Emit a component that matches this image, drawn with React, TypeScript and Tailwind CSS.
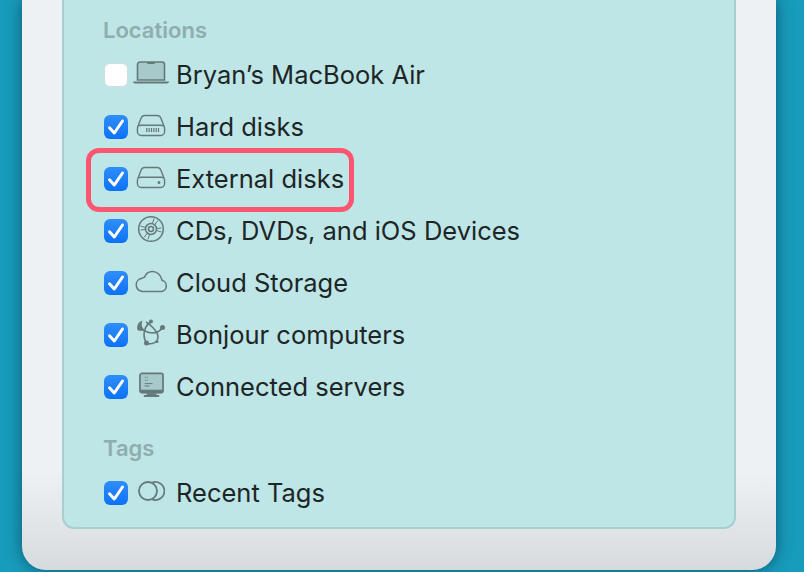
import React from 'react';

const stroke = '#66797a';

function Laptop() {
  return (
    <svg width="38" height="26" viewBox="0 0 38 26" fill="none">
      <path d="M5.500 20V4.500a2.500 2.500 0 0 1 2.500-2.500h22a2.500 2.500 0 0 1 2.500 2.500V20z" fill="#a6c9c9" stroke={stroke} strokeWidth="1.600" />
      <rect x="15" y="2" width="8" height="2" rx="1" fill={stroke} />
      <path d="M1 21.500h36c0 1.200-1 2-2.200 2H3.200C2 23.500 1 22.700 1 21.500z" fill={stroke} />
    </svg>
  );
}

function DiskBody() {
  return (
    <>
      <path d="M9.500 1.500h13c2 0 3.300.8 4 2.500l3.500 8.500c.3.800.5 1.500.5 2.300v2.700a4 4 0 0 1-4 4h-21a4 4 0 0 1-4-4v-2.700c0-.8.2-1.500.5-2.300l3.500-8.500c.7-1.700 2-2.500 4-2.500z" />
      <path d="M2.500 12c.8-.6 1.800-.8 3-.8h21c1.200 0 2.200.2 3 .8" />
    </>
  );
}

function HardDisk() {
  return (
    <svg width="30" height="23" viewBox="0 0 32 23" preserveAspectRatio="none" fill="none" stroke={stroke} strokeWidth="1.500">
      <DiskBody />
      <path d="M11.500 14v4M14 14v4M16.500 14v4M19 14v4M21.500 14v4M24 14v4" strokeWidth="1.300" />
    </svg>
  );
}

function ExternalDisk() {
  return (
    <svg width="30" height="23" viewBox="0 0 32 23" preserveAspectRatio="none" fill="none" stroke={stroke} strokeWidth="1.500">
      <DiskBody />
      <circle cx="24.500" cy="16.500" r="1.500" fill={stroke} stroke="none" />
    </svg>
  );
}

function Disc() {
  return (
    <svg width="28" height="28" viewBox="0 0 28 28" fill="none" stroke={stroke} strokeWidth="1.500">
      <circle cx="14" cy="14" r="12.300" />
      <circle cx="14" cy="14" r="5.500" />
      <circle cx="14" cy="14" r="2.500" />
      <path d="M17 3.500l-1.500 5M21 5.500l-3.500 4.500M11 24.500l1.500-5M7 22.500l3.500-4.500M3.500 11l5 1.500M3.500 15l5-.5M24.500 17l-5-1.500M24.500 13l-5 .5" strokeWidth="1" />
    </svg>
  );
}

function Cloud() {
  return (
    <svg width="33" height="23" viewBox="0 0 34 24" fill="none" stroke={stroke} strokeWidth="1.600">
      <path d="M8 22.500h18.500a6 6 0 0 0 1.500-11.800C27 5.500 23 1.500 18 1.500c-4 0-7 2.500-8.300 6-1 0-2 .4-2.500 1.200C3.800 9.200 1 12 1 15.500c0 4 3.200 7 7 7z" />
    </svg>
  );
}

function Bonjour() {
  return (
    <svg width="30" height="28" viewBox="0 0 30 28" fill="none" stroke={stroke} strokeWidth="1.600">
      <path d="M3 5c2 5 7 9 13 9 4 0 8-2 10-5" />
      <path d="M15 2.500c-4 3-7 8-7 13 0 3 .8 6 2.500 8" />
      <path d="M10 3c4 2.500 12 9 12 15 0 4-3.500 7-10 7" />
      <path d="M1.500 11C.5 7 2 3 6.500 1.500 5 4 5.500 8 8 11.500 5.500 12 3 12 1.500 11z" fill={stroke} stroke="none" />
      <circle cx="15" cy="2.500" r="2" fill={stroke} stroke="none" />
      <circle cx="26.500" cy="8.500" r="2.500" fill={stroke} stroke="none" />
      <circle cx="10.500" cy="24" r="2.500" fill={stroke} stroke="none" />
      <circle cx="21" cy="22.500" r="1.500" fill={stroke} stroke="none" />
    </svg>
  );
}

function Server() {
  return (
    <svg width="25" height="26" viewBox="0 0 26 26" fill="none">
      <rect x="1" y="1" width="24" height="20" rx="2" fill="#a6c9c9" stroke={stroke} strokeWidth="1.800" />
      <path d="M1 18h24v1.500a2 2 0 0 1-2 2H3a2 2 0 0 1-2-2z" fill={stroke} />
      <path d="M8 21.500h10v2H8zM5 23.500h16v2H5z" fill={stroke} />
      <path d="M6 5h1M8 5h1M6 8h1M8 8h1M6 11.500h8M6 14h5" stroke={stroke} strokeWidth="1" />
    </svg>
  );
}

function Tags() {
  return (
    <svg width="27" height="20" viewBox="0 0 27 20" fill="none" stroke={stroke} strokeWidth="1.800">
      <circle cx="10" cy="10" r="9" />
      <path d="M13.750 1.800A9 9 0 1 1 13.750 18.200" />
    </svg>
  );
}

function Check({ on }: { on: boolean }) {
  if (!on) {
    return <div className="w-6 h-6 rounded-[6px] bg-white border border-[#d5dcdc] shrink-0" />;
  }
  return (
    <div className="w-6 h-6 rounded-[6px] bg-gradient-to-b from-[#2f8dfb] to-[#0a72f5] shrink-0">
      <svg width="24" height="24" viewBox="0 0 24 24" fill="none" stroke="white" strokeWidth="3" strokeLinecap="round" strokeLinejoin="round">
        <path d="M5.500 12.800l4.800 5.200L18.500 6" />
      </svg>
    </div>
  );
}

function Row({ label, icon, on = true, className = '' }: { label: string; icon: React.ReactNode; on?: boolean; className?: string }) {
  return (
    <div className={`flex items-center h-[52px] ${className}`}>
      <Check on={on} />
      <div className="w-12 pr-[2px] pb-1 flex items-center justify-center shrink-0">{icon}</div>
      <span className="text-[25.500px] leading-none text-[#1d2526] whitespace-nowrap">{label}</span>
    </div>
  );
}

export default function App() {
  return (
    <div
      className="w-[804px] h-[572px] overflow-hidden bg-[#189cbc] pl-[22px] pr-[28px] pb-[2px]"
      style={{ fontFamily: 'Inter, "Noto Sans", "Liberation Sans", sans-serif' }}
    >
      <div className="h-full rounded-b-[24px] bg-gradient-to-b from-[#edf1f3] via-[#edf1f3] via-[83%] to-[#d8dbdd] shadow-[0_0_16px_rgba(0,30,50,0.55)] px-[40px] pb-[41px]">
        <div className="relative h-full rounded-b-[12px] bg-[#bee6e6] border-x-2 border-b-2 border-[#a8cfcf] pl-[40px]">
          <div className="h-[49px] -ml-px flex items-end pb-[8px] text-[22px] leading-none font-semibold text-[#8fadad]">Locations</div>
          <Row label="Bryan’s MacBook Air" icon={<Laptop />} on={false} />
          <Row label="Hard disks" icon={<HardDisk />} />
          <Row label="External disks" icon={<ExternalDisk />} />
          <Row label="CDs, DVDs, and iOS Devices" icon={<Disc />} />
          <Row label="Cloud Storage" icon={<Cloud />} />
          <Row label="Bonjour computers" icon={<Bonjour />} />
          <Row label="Connected servers" icon={<Server />} />
          <div className="h-[50px] -ml-px flex items-end pb-[4px] text-[22px] leading-none font-semibold text-[#8fadad]">Tags</div>
          <Row label="Recent Tags" icon={<Tags />} className="mt-[4px]" />
          {/* red highlight round External disks */}
          <div className="absolute left-[22px] top-[148px] w-[268px] h-[64px] rounded-[13px] border-[5px] border-[#fb5570]" />
        </div>
      </div>
    </div>
  );
}
